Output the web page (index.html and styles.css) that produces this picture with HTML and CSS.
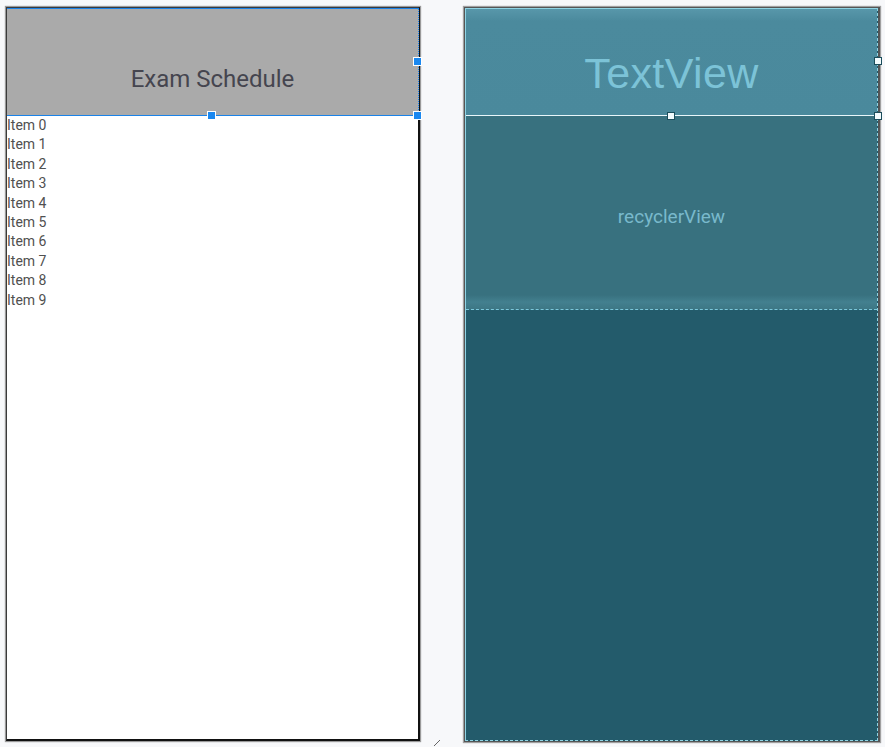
FILE: index.html
```html
<!DOCTYPE html>
<html>
<head>
<meta charset="utf-8">
<link rel="stylesheet" href="styles.css">
</head>
<body>
<div class="canvas">
  <div class="phone design">
    <div class="header">
      <span class="title">Exam Schedule</span>
      <span class="handle h-bottom"></span>
      <span class="handle h-right-mid"></span>
      <span class="handle h-right-bot"></span>
    </div>
    <ul class="list">
      <li>Item 0</li>
      <li>Item 1</li>
      <li>Item 2</li>
      <li>Item 3</li>
      <li>Item 4</li>
      <li>Item 5</li>
      <li>Item 6</li>
      <li>Item 7</li>
      <li>Item 8</li>
      <li>Item 9</li>
    </ul>
  </div>
  <svg class="resize" width="8" height="8" viewBox="0 0 8 8"><path d="M1 7 L7 1" stroke="#666" stroke-width="1"/></svg>
  <div class="phone blueprint">
    <div class="bp-inner">
      <div class="bp-text">
        <span class="bp-title">TextView</span>
        <span class="whandle w-bottom"></span>
        <span class="whandle w-right-mid"></span>
        <span class="whandle w-right-bot"></span>
      </div>
      <div class="bp-recycler"><span>recyclerView</span></div>
      <div class="bp-rest"></div>
    </div>
  </div>
</div>
</body>
</html>
```
FILE: styles.css
```css
html, body {
  margin: 0;
  padding: 0;
  background: #f7f8fa;
  width: 885px;
  height: 747px;
  overflow: hidden;
  font-family: Roboto, "Liberation Sans", sans-serif;
}
.canvas {
  display: flex;
  align-items: flex-start;
  padding: 7px 0 0 6px;
  position: relative;
}
.phone {
  box-sizing: border-box;
  position: relative;
}
.design {
  width: 414px;
  height: 734px;
  background: #fff;
  border-left: 1px solid #3a3a3a;
  border-top: 1px solid #3a3a3a;
  border-right: 2px solid #111;
  border-bottom: 2px solid #111;
  box-shadow: 0 0 1px 1px #9a9a9a;
}
.header {
  position: relative;
  height: 106px;
  background: #aaaaaa;
  border-top: 1px solid #1a82e8;
  border-bottom: 1px solid #1a82e8;
  border-right: 1px dotted #1a82e8;
  display: flex;
  align-items: center;
  justify-content: center;
  margin-right: -1px;
}
.title {
  font-size: 24px;
  color: #45454f;
  padding-top: 34px;
}
.handle {
  position: absolute;
  width: 7px;
  height: 7px;
  background: #1a88f0;
  border: 1px solid #fff;
}
.h-bottom { left: 200px; bottom: -5px; }
.h-right-mid { right: -4px; top: 48px; }
.h-right-bot { right: -4px; bottom: -5px; }
.list {
  list-style: none;
  margin: 0;
  padding: 0;
}
.list li {
  font-size: 14px;
  line-height: 19.4px;
  color: #505050;
  height: 19.4px;
}
.resize {
  position: absolute;
  left: 433px;
  top: 739px;
}
.blueprint {
  margin-left: 44px;
  width: 416px;
  height: 735px;
  border: 1px solid #555;
  border-right-width: 2px;
  box-shadow: 0 0 1px 1px #a0a0a0;
  background: #235b6b;
}
.bp-inner {
  height: 100%;
  border: 1px solid #8fd3e3;
  border-right: 1px dashed #8fd3e3;
  border-bottom: 1px dashed #8fd3e3;
  box-sizing: border-box;
  display: flex;
  flex-direction: column;
}
.bp-text {
  position: relative;
  height: 106px;
  background: linear-gradient(#5897aa 0px, #4b8a9d 12px, #4a899c 100%);
  border-bottom: 1px solid #e8f6fa;
  display: flex;
  align-items: center;
  justify-content: center;
}
.bp-title {
  font-family: "Liberation Sans", Arial, sans-serif;
  font-size: 43px;
  letter-spacing: 0.4px;
  color: #7cc3d7;
  padding-top: 23px;
}
.whandle {
  position: absolute;
  width: 6px;
  height: 6px;
  background: #f2fbfd;
  border: 1px solid #1b4d5b;
}
.w-bottom { left: 201px; bottom: -5px; }
.w-right-mid { right: -5px; top: 48px; }
.w-right-bot { right: -5px; bottom: -5px; }
.bp-recycler {
  height: 193px;
  background: linear-gradient(#38717f 0px, #38717f 179px, #43808f 186px, #3d7785 193px);
  border-bottom: 1px dashed #7cc9dc;
  display: flex;
  align-items: center;
  justify-content: center;
}
.bp-recycler span {
  font-size: 19px;
  color: #79b9cc;
  padding-top: 8px;
}
.bp-rest {
  flex: 1;
  background: #235b6b;
}
```
